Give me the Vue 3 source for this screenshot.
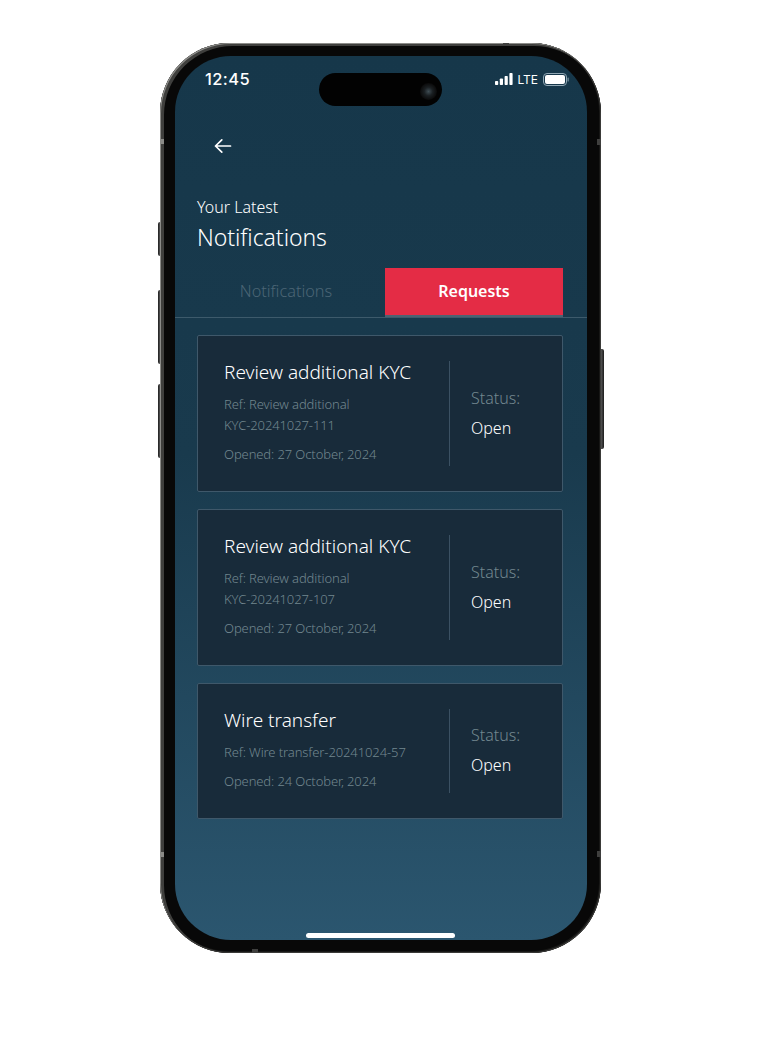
<script setup>
const cards = [
  { title: 'Review additional KYC', ref: ['Ref: Review additional', 'KYC-20241027-111'], opened: 'Opened: 27 October, 2024' },
  { title: 'Review additional KYC', ref: ['Ref: Review additional', 'KYC-20241027-107'], opened: 'Opened: 27 October, 2024' },
  { title: 'Wire transfer', ref: ['Ref: Wire transfer-20241024-57'], opened: 'Opened: 24 October, 2024' },
]
</script>

<template>
  <div class="page">
    <div class="phone">
      <span class="btn b1"></span>
      <span class="btn b2"></span>
      <span class="btn b3"></span>
      <span class="btn b4"></span>
      <span class="band top"></span>
      <span class="band bottom"></span>
      <span class="band left l1"></span>
      <span class="band left l2"></span>
      <span class="band right r1"></span>
      <span class="band right r2"></span>
      <div class="screen">
        <div class="island"><span class="lens"></span></div>
        <div class="status">
          <span class="time">12:45</span>
          <div class="status-right">
            <svg class="bars" width="18" height="12" viewBox="0 0 18 12">
              <rect x="0" y="8" width="3.2" height="4" rx="0.8" fill="#fff" />
              <rect x="4.8" y="5.5" width="3.2" height="6.5" rx="0.8" fill="#fff" />
              <rect x="9.6" y="3" width="3.2" height="9" rx="0.8" fill="#fff" />
              <rect x="14.4" y="0" width="3.2" height="12" rx="0.8" fill="#fff" />
            </svg>
            <span class="lte">LTE</span>
            <svg class="battery" width="26" height="13" viewBox="0 0 26 13">
              <rect x="0.5" y="0.5" width="23" height="12" rx="3.5" fill="none" stroke="#8fa6b3" />
              <rect x="2" y="2" width="20" height="9" rx="2" fill="#fff" />
              <rect x="24.6" y="4.5" width="1" height="4" rx="0.5" fill="#8fa6b3" />
            </svg>
          </div>
        </div>
        <div class="back">
          <svg width="18" height="16" viewBox="0 0 18 16" fill="none" stroke="#fff" stroke-width="1.7" stroke-linecap="round" stroke-linejoin="round">
            <path d="M16.5 8H1.5M7.8 1.8 1.5 8l6.3 6.2" />
          </svg>
        </div>
        <div class="heading">
          <div class="eyebrow">Your Latest</div>
          <h1>Notifications</h1>
        </div>
        <div class="tabs">
          <div class="tab">Notifications</div>
          <div class="tab active">Requests</div>
        </div>
        <div class="cards">
          <div v-for="(c, i) in cards" :key="i" class="card">
            <div class="info">
              <div class="title">{{ c.title }}</div>
              <div class="ref">
                <div v-for="line in c.ref" :key="line">{{ line }}</div>
              </div>
              <div class="opened">{{ c.opened }}</div>
            </div>
            <div class="state">
              <div class="label">Status:</div>
              <div class="value">Open</div>
            </div>
          </div>
        </div>
        <div class="home"></div>
      </div>
    </div>
  </div>
</template>

<style>
html, body { margin: 0; background: #fff; }
</style>

<style scoped>
.page {
  width: 768px;
  height: 1041px;
  padding: 43px 0 0 160px;
  box-sizing: border-box;
  background: #fff;
  font-family: "Noto Sans", sans-serif;
  color: #fff;
  overflow: hidden;
}
.phone {
  position: relative;
  width: 441px;
  height: 910px;
  box-sizing: border-box;
  padding: 13px 14px 13px 15px;
  border-radius: 70px;
  background: #080808;
  box-shadow:
    inset 1px 1px 0 0 #8c8c89,
    inset 0 0 0 1px #3a3a38,
    inset 3px 2px 0 1px #3f3f3d,
    inset -1px -1px 0 1px #171716;
}
.btn {
  position: absolute;
  width: 2px;
  background: linear-gradient(90deg, #1c1c1c, #555);
  border-radius: 2px 0 0 2px;
}
.b1 { left: -2px; top: 179px; height: 34px; }
.b2 { left: -2px; top: 247px; height: 74px; }
.b3 { left: -2px; top: 341px; height: 74px; }
.b4 {
  right: -3px;
  top: 306px;
  width: 3px;
  height: 100px;
  border-radius: 0 2px 2px 0;
  background: linear-gradient(90deg, #555, #1c1c1c);
}
.band {
  position: absolute;
  background: #3f3f3e;
}
.band.top { top: 0; left: 343px; width: 6px; height: 3px; }
.band.bottom { bottom: 0; left: 92px; width: 6px; height: 4px; }
.band.left { left: 0; width: 4px; height: 5px; background: #8a8a87; }
.band.right { right: 0; width: 4px; height: 6px; }
.l1, .r1 { top: 96px; }
.l2, .r2 { bottom: 96px; }
.screen {
  position: relative;
  height: 884px;
  border-radius: 56px;
  background: linear-gradient(180deg, #16374a 0%, #193a4d 45%, #2b566f 100%);
  overflow: hidden;
}
.island {
  position: absolute;
  left: 144px;
  top: 17px;
  width: 123px;
  height: 33px;
  border-radius: 17px;
  background: #020202;
}
.lens {
  position: absolute;
  right: 5px;
  top: 10px;
  width: 17px;
  height: 17px;
  border-radius: 50%;
  background: radial-gradient(circle at 50% 50%, #3f4d54 0, #1a1f22 35%, #0a0a0a 70%);
}
.status {
  display: flex;
  justify-content: space-between;
  align-items: center;
  height: 18px;
  padding: 14px 18px 0 30px;
}
.time {
  font-family: Inter, sans-serif;
  font-size: 16.5px;
  font-weight: 500;
  letter-spacing: 0.4px;
}
.status-right {
  display: flex;
  align-items: center;
  gap: 5px;
}
.lte {
  font-family: Inter, sans-serif;
  font-size: 12px;
}
.bars, .battery { display: block; }
.bars { margin-right: -1px; }
.back {
  margin: 50px 0 0 39px;
  height: 16px;
}
.back svg { display: block; }
.heading {
  margin: 42px 0 0 22px;
}
.eyebrow {
  font-size: 16px;
  font-weight: 300;
  line-height: 22px;
}
h1 {
  margin: 3px 0 0;
  font-size: 23px;
  font-weight: 300;
  letter-spacing: -0.05px;
  line-height: 32px;
}
.tabs {
  display: grid;
  grid-template-columns: 178px 178px;
  gap: 10px;
  margin-top: 15px;
  padding: 0 24px 0 22px;
  height: 49px;
  border-bottom: 1px solid #3d5a6b;
}
.tab {
  display: flex;
  align-items: center;
  justify-content: center;
  height: 49px;
  box-sizing: border-box;
  padding-bottom: 4px;
  font-size: 16.3px;
  font-weight: 300;
  color: #4b6575;
}
.tab.active {
  background: #e42c45;
  color: #fff;
  font-size: 16px;
  font-weight: 600;
  padding-bottom: 2px;
  border-bottom: 2px solid #4d6272;
}
.cards {
  display: flex;
  flex-direction: column;
  gap: 17px;
  margin-top: 17px;
  padding: 0 24px 0 22px;
}
.card {
  display: flex;
  box-sizing: border-box;
  padding: 25px 0;
  background: #182b3a;
  border: 1px solid #3f586a;
  border-radius: 2px;
}
.info {
  width: 252px;
  box-sizing: border-box;
  padding: 0 0 1px 26px;
  border-right: 1px solid #3b5163;
}
.title {
  font-size: 19px;
  font-weight: 300;
  line-height: 22px;
}
.ref {
  margin-top: 11px;
  font-size: 13px;
  font-weight: 300;
  letter-spacing: -0.1px;
  line-height: 21px;
  color: #72878f;
}
.opened {
  margin-top: 8px;
  font-size: 13px;
  font-weight: 300;
  letter-spacing: -0.1px;
  line-height: 21px;
  color: #72878f;
}
.state {
  display: flex;
  flex-direction: column;
  justify-content: center;
  gap: 8px;
  padding: 0 0 2px 21px;
}
.label {
  font-size: 16px;
  font-weight: 300;
  line-height: 22px;
  color: #72878f;
}
.value {
  font-size: 16px;
  font-weight: 300;
  line-height: 22px;
}
.home {
  position: absolute;
  left: 131px;
  bottom: 2px;
  width: 149px;
  height: 5px;
  border-radius: 3px;
  background: #fff;
}
</style>
